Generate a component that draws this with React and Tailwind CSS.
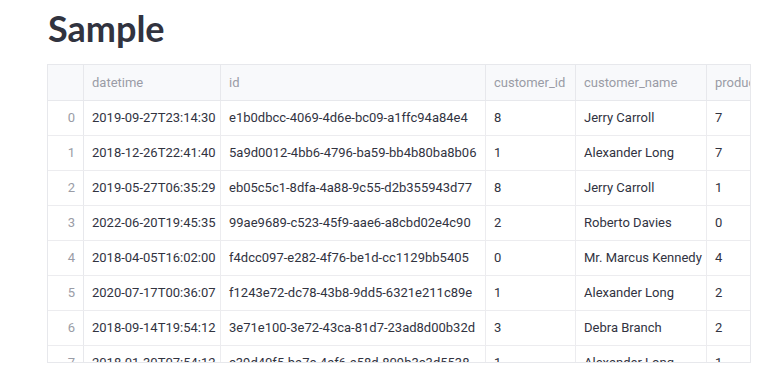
const rows = [
  ['2019-09-27T23:14:30', 'e1b0dbcc-4069-4d6e-bc09-a1ffc94a84e4', '8', 'Jerry Carroll', '7'],
  ['2018-12-26T22:41:40', '5a9d0012-4bb6-4796-ba59-bb4b80ba8b06', '1', 'Alexander Long', '7'],
  ['2019-05-27T06:35:29', 'eb05c5c1-8dfa-4a88-9c55-d2b355943d77', '8', 'Jerry Carroll', '1'],
  ['2022-06-20T19:45:35', '99ae9689-c523-45f9-aae6-a8cbd02e4c90', '2', 'Roberto Davies', '0'],
  ['2018-04-05T16:02:00', 'f4dcc097-e282-4f76-be1d-cc1129bb5405', '0', 'Mr. Marcus Kennedy', '4'],
  ['2020-07-17T00:36:07', 'f1243e72-dc78-43b8-9dd5-6321e211c89e', '1', 'Alexander Long', '2'],
  ['2018-09-14T19:54:12', '3e71e100-3e72-43ca-81d7-23ad8d00b32d', '3', 'Debra Branch', '2'],
  ['2018-01-30T07:54:12', 'c39d40f5-ba7c-4af6-a58d-809b3c3d5538', '1', 'Alexander Long', '1'],
]

const cols = [
  { name: 'datetime', w: 'w-[137px]' },
  { name: 'id', w: 'w-[265px]' },
  { name: 'customer_id', w: 'w-[90px]' },
  { name: 'customer_name', w: 'w-[131px]' },
  { name: 'product_id', w: 'w-[100px]' },
]

export default function App() {
  return (
    <div className="w-[773px] h-[383px] bg-white overflow-hidden font-['Roboto',sans-serif]">
      <div className="pl-[48px] pt-[6px]">
        <h1 className="font-['Lato',sans-serif] font-bold text-[36px] leading-[44px] text-[#31333f]">Sample</h1>
      </div>
      <div className="ml-[47px] mt-[14px] w-[704px] h-[299px] border border-[#e7e8ec] overflow-hidden">
        <div className="flex h-[36px] bg-[#f8f9fb] border-b border-[#e7e8ec] text-[13px] text-[#9a9ca6]">
          <div className="w-[36px] shrink-0 border-r border-[#e7e8ec]" />
          {cols.map((c) => (
            <div key={c.name} className={`${c.w} shrink-0 flex items-center px-2 border-r border-[#e7e8ec] whitespace-nowrap`}>
              {c.name}
            </div>
          ))}
        </div>
        {rows.map((r, i) => (
          <div key={i} className="flex h-[35px] border-b border-[#ececef] text-[13px] text-[#31333f]">
            <div className="w-[36px] shrink-0 flex items-center justify-end pr-2 border-r border-[#e7e8ec] text-[#9a9ca6]">{i}</div>
            {r.map((v, j) => (
              <div key={j} className={`${cols[j].w} shrink-0 flex items-center px-2 border-r border-[#ececef] whitespace-nowrap`}>
                {v}
              </div>
            ))}
          </div>
        ))}
      </div>
    </div>
  )
}
